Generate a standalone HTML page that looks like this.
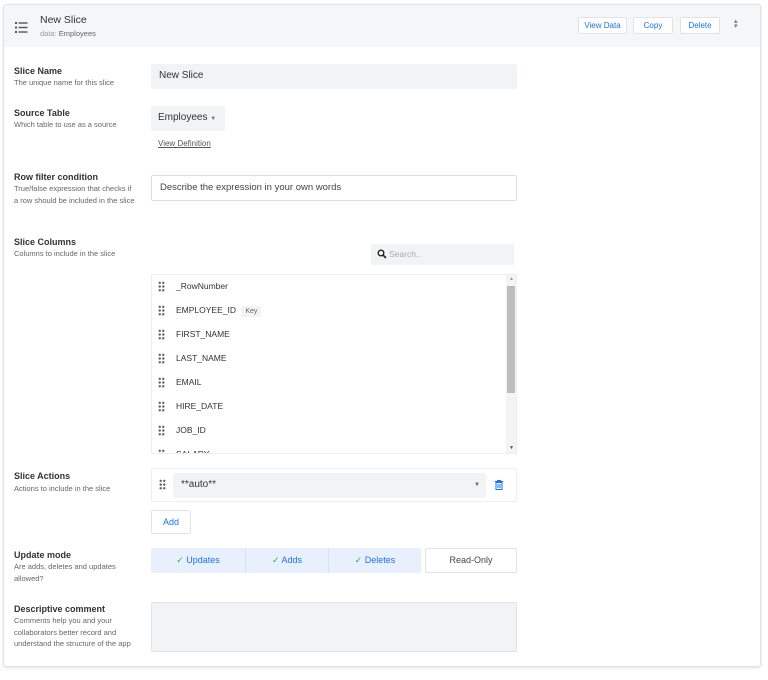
<!DOCTYPE html>
<html><head><meta charset="utf-8"><style>
*{box-sizing:border-box;margin:0;padding:0}
body{width:768px;height:680px;background:#fff;font-family:"Liberation Sans",sans-serif;position:relative;overflow:hidden;color:#333}
.card{position:absolute;left:3px;top:4px;width:758px;height:663px;border:1px solid #e2e2e2;border-radius:3px;box-shadow:0 1px 3px rgba(0,0,0,.12)}
.hdr{position:absolute;left:0;top:0;right:0;height:42px;background:#f5f6f7}
.in{position:absolute;left:1px;top:1px;width:756px;height:661px}
.a{position:absolute;white-space:nowrap}
.lbl{position:absolute;left:9px;font-size:9px;font-weight:bold;color:#333}
.sub{position:absolute;left:9px;font-size:7.5px;color:#666;line-height:11.5px;width:122px}
.btn{position:absolute;top:11px;height:17px;background:#fff;border:1px solid #e3e3e3;border-radius:2px;color:#1a73e8;font-size:8px;text-align:center;line-height:15px}
.row{position:absolute;left:24px;font-size:8.5px;color:#333}
.grip{position:absolute;left:6px;width:7px;height:11px;background-image:radial-gradient(circle,#666 1.1px,transparent 1.3px);background-size:3.5px 3.7px}
</style></head><body>
<div class="card">
<div class="hdr"></div>
<div class="in">
 <div class="a" style="left:10px;top:14px">
  <svg width="13" height="11" viewBox="0 0 13 11"><g fill="#555"><rect x="0" y="0" width="2" height="2"/><rect x="0" y="4.5" width="2" height="2"/><rect x="0" y="9" width="2" height="2"/><rect x="3.5" y="0.3" width="9" height="1.4"/><rect x="3.5" y="4.8" width="9" height="1.4"/><rect x="3.5" y="9.3" width="9" height="1.4"/></g></svg>
 </div>
 <div class="a" style="left:35px;top:8px;font-size:10.5px;color:#333">New Slice</div>
 <div class="a" style="left:35px;top:23px;font-size:7.5px;color:#999">data: <span style="color:#666">Employees</span></div>
 <div class="btn" style="left:573px;width:49px">View Data</div>
 <div class="btn" style="left:628px;width:40px">Copy</div>
 <div class="btn" style="left:675px;width:40px">Delete</div>
 <div class="a" style="left:729px;top:13px;font-size:7px;color:#777;line-height:5px">▴<br>▾</div>

<div class="lbl" style="top:60px">Slice Name</div>
<div class="sub" style="top:71px">The unique name for this slice</div>
<div class="a" style="left:146px;top:58px;width:366px;height:25px;background:#f1f3f4;border-radius:2px;font-size:10px;padding:6px 8px;color:#333">New Slice</div>

<div class="lbl" style="top:102px">Source Table</div>
<div class="sub" style="top:113px">Which table to use as a source</div>
<div class="a" style="left:146px;top:100px;width:74px;height:25px;background:#f1f3f4;border-radius:2px;font-size:10px;padding:6px 7px;color:#333">Employees <span style="font-size:6px;color:#777">▼</span></div>
<div class="a" style="left:153px;top:133px;font-size:8px;color:#555;text-decoration:underline">View Definition</div>

<div class="lbl" style="top:166px">Row filter condition</div>
<div class="sub" style="top:177px;width:122px;white-space:normal">True/false expression that checks if a row should be included in the slice</div>
<div class="a" style="left:146px;top:169px;width:366px;height:26px;border:1px solid #ddd;border-radius:2px;font-size:9.5px;padding:6px 8px;color:#444">Describe the expression in your own words</div>

<div class="lbl" style="top:231px">Slice Columns</div>
<div class="sub" style="top:242px">Columns to include in the slice</div>
<div class="a" style="left:366px;top:238px;width:143px;height:21px;background:#f1f3f4;border-radius:2px;font-size:8.5px;color:#aaa;padding:5px 0 0 18px">Search..
 <svg class="a" style="left:6px;top:5px" width="10" height="10" viewBox="0 0 10 10"><circle cx="4" cy="4" r="2.8" stroke="#222" stroke-width="1.4" fill="none"/><path d="M6 6l3 3" stroke="#222" stroke-width="1.6"/></svg>
</div>
<div class="a" style="left:146px;top:268px;width:366px;height:180px;border:1px solid #eee;overflow:hidden">
 <div class="a" style="right:0;top:0;width:10px;height:178px;background:#f4f4f4"></div>
 <div class="a" style="right:1px;top:11px;width:8px;height:107px;background:#bdbdbd"></div>
 <div class="a" style="right:2px;top:1px;font-size:5px;color:#999">▲</div>
 <div class="a" style="right:2px;top:170px;font-size:5px;color:#555">▼</div>
 <div class="grip" style="top:6px"></div><div class="row" style="top:6px">_RowNumber</div>
 <div class="grip" style="top:30px"></div><div class="row" style="top:30px">EMPLOYEE_ID <span style="font-size:7px;color:#666;background:#f3f3f3;padding:2px 4px;margin-left:3px">Key</span></div>
 <div class="grip" style="top:54px"></div><div class="row" style="top:54px">FIRST_NAME</div>
 <div class="grip" style="top:78px"></div><div class="row" style="top:78px">LAST_NAME</div>
 <div class="grip" style="top:102px"></div><div class="row" style="top:102px">EMAIL</div>
 <div class="grip" style="top:126px"></div><div class="row" style="top:126px">HIRE_DATE</div>
 <div class="grip" style="top:150px"></div><div class="row" style="top:150px">JOB_ID</div>
 <div class="grip" style="top:174px"></div><div class="row" style="top:174px">SALARY</div>
</div>

<div class="lbl" style="top:465px">Slice Actions</div>
<div class="sub" style="top:477px">Actions to include in the slice</div>
<div class="a" style="left:146px;top:462px;width:366px;height:34px;border:1px solid #eee;border-radius:2px">
 <div class="grip" style="top:10px;left:7px"></div>
 <div class="a" style="left:21px;top:4px;width:313px;height:25px;background:#f1f3f4;border-radius:3px;font-size:10px;padding:6px 8px;color:#333">**auto**<span class="a" style="right:6px;top:9px;font-size:6px;color:#666">▼</span></div>
 <svg class="a" style="left:343px;top:11px" width="8" height="10" viewBox="0 0 8 10"><path d="M0 1.5h8M2.5 1.5V0.5h3v1M1 2.5h6v7H1z M3 4v4M5 4v4" stroke="#1a73e8" stroke-width="1" fill="none"/></svg>
</div>
<div class="a" style="left:146px;top:504px;width:40px;height:24px;border:1px solid #e3e3e3;border-radius:2px;color:#1a73e8;font-size:9px;text-align:center;line-height:22px">Add</div>

<div class="lbl" style="top:544px">Update mode</div>
<div class="sub" style="top:555px;white-space:normal">Are adds, deletes and updates allowed?</div>
<div class="a" style="left:146px;top:542px;width:270px;height:25px;background:#e8f0fe;border-radius:2px;font-size:9px;color:#1a73e8">
 <div class="a" style="left:0;top:0;width:95px;height:25px;line-height:25px;text-align:center;border-right:1px solid #d6e2f5"><span style="color:#34a853">✓</span> Updates</div>
 <div class="a" style="left:95px;top:0;width:83px;height:25px;line-height:25px;text-align:center;border-right:1px solid #d6e2f5"><span style="color:#34a853">✓</span> Adds</div>
 <div class="a" style="left:178px;top:0;width:92px;height:25px;line-height:25px;text-align:center"><span style="color:#34a853">✓</span> Deletes</div>
</div>
<div class="a" style="left:420px;top:542px;width:92px;height:25px;border:1px solid #e3e3e3;border-radius:2px;font-size:9px;text-align:center;line-height:23px;color:#444">Read-Only</div>

<div class="lbl" style="top:598px">Descriptive comment</div>
<div class="sub" style="top:609px;white-space:normal">Comments help you and your collaborators better record and understand the structure of the app</div>
<div class="a" style="left:146px;top:596px;width:366px;height:50px;background:#f1f3f4;border:1px solid #e3e3e3;border-radius:2px"></div>
</div>
</div>
</body></html>
